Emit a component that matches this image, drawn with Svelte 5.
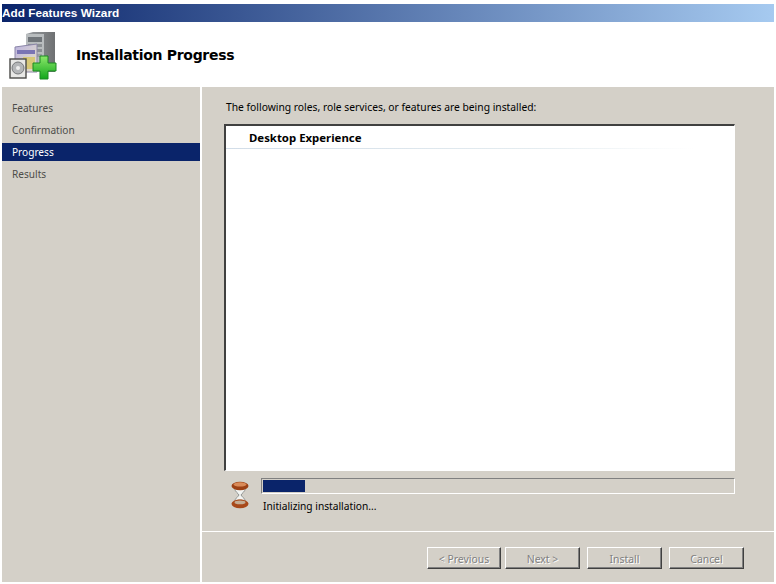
<script lang="ts">
	const STEPS = ['Features', 'Confirmation', 'Progress', 'Results'];
	const ACTIVE = 'Progress';
	const BUTTONS = [
		{ label: '< Previous', width: 74 },
		{ label: 'Next >', width: 75 },
		{ label: 'Install', width: 75 },
		{ label: 'Cancel', width: 75 }
	];
</script>

<div class="wizard">
	<div class="titlebar">Add Features Wizard</div>

	<header class="header">
		<svg class="logo" width="50" height="50" viewBox="0 0 50 50" aria-hidden="true">
			<defs>
				<linearGradient id="tower" x1="0" y1="0" x2="1" y2="0">
					<stop offset="0" stop-color="#9a9ea2" />
					<stop offset="1" stop-color="#6e7072" />
				</linearGradient>
				<linearGradient id="plus" x1="0" y1="0" x2="0" y2="1">
					<stop offset="0" stop-color="#8ce86a" />
					<stop offset="1" stop-color="#12a61c" />
				</linearGradient>
				<linearGradient id="card" x1="0" y1="0" x2="1" y2="1">
					<stop offset="0" stop-color="#bcb4e0" />
					<stop offset="1" stop-color="#e8e2c6" />
				</linearGradient>
			</defs>
			<path d="M17 4 L24 2 H46 V42 H17 Z" fill="url(#tower)" />
			<rect x="17" y="4" width="18" height="38" fill="#b8bcbe" />
			<rect x="19" y="7" width="14" height="5" fill="#70757a" />
			<rect x="19" y="14" width="14" height="3" fill="#8c9094" />
			<rect x="19" y="19" width="14" height="3" fill="#8c9094" />
			<rect x="19" y="24" width="14" height="3" fill="#9a9ea2" />
			<path d="M6 17 L28 14 V42 H6 Z" fill="url(#card)" stroke="#8b86a8" stroke-width="1" />
			<rect x="8" y="20" width="18" height="4" fill="#7a74b4" />
			<rect x="14" y="27" width="12" height="12" fill="#d8c878" />
			<rect x="1" y="29" width="16" height="19" fill="#e8e8e6" stroke="#4a4a48" stroke-width="1.4" />
			<circle cx="9" cy="38" r="6" fill="#b4b6b8" stroke="#77797b" />
			<circle cx="9" cy="38" r="2" fill="#eeeeee" />
			<path d="M31 26 H39 V33 H47 V41 H39 V49 H31 V41 H24 V33 H31 Z" fill="url(#plus)" stroke="#1b8a22" stroke-width="1" />
		</svg>
		<h1>Installation Progress</h1>
	</header>

	<div class="body">
		<nav class="steps">
			{#each STEPS as step}
				<div class="step" class:active={step === ACTIVE}>{step}</div>
			{/each}
		</nav>

		<main class="main">
			<div class="content">
				<p class="intro">The following roles, role services, or features are being installed:</p>

				<div class="list">
					<div class="list-row">Desktop Experience</div>
				</div>

				<div class="status">
					<svg class="hourglass" width="18" height="28" viewBox="0 0 18 28" aria-hidden="true">
						<path d="M3.5 7 C4 11 7.5 12.5 8 14 C7.5 15.5 4 17 3.5 21 H14.5 C14 17 10.5 15.5 10 14 C10.5 12.5 14 11 14.5 7 Z" fill="#f2f4f2" stroke="#7c8280" stroke-width="0.8" />
						<path d="M7 18.5 H11 L13 21 H5 Z" fill="#b89474" />
						<ellipse cx="9" cy="5" rx="8.5" ry="4.2" fill="#9c4014" />
						<ellipse cx="9" cy="3.4" rx="6.5" ry="2.1" fill="#d98a58" />
						<ellipse cx="9" cy="22.8" rx="8.5" ry="4.4" fill="#a8481a" />
						<ellipse cx="9" cy="21.4" rx="5.5" ry="1.8" fill="#c4ac94" />
					</svg>
					<div class="status-right">
						<div class="progress"><div class="bar" style="width: {42}px"></div></div>
						<div class="status-text">Initializing installation...</div>
					</div>
				</div>
			</div>

			<footer class="footer">
				{#each BUTTONS as btn}
					<button type="button" disabled style="width: {btn.width}px">{btn.label}</button>
				{/each}
			</footer>
		</main>
	</div>
</div>

<style>
	:global(body) {
		margin: 0;
		background: #fff;
	}

	.wizard {
		width: 776px;
		height: 584px;
		box-sizing: border-box;
		padding: 4px 2px 2px 2px;
		display: flex;
		flex-direction: column;
		font-family: "Noto Sans", "Liberation Sans", sans-serif;
		font-size: 10.3px;
		color: #000;
		overflow: hidden;
	}

	.titlebar {
		height: 18px;
		line-height: 18px;
		background: linear-gradient(to right, #0a246a, #a6caf0);
		color: #fff;
		font-family: "Liberation Sans", sans-serif;
		font-size: 11.8px;
		font-weight: 700;
	}

	.header {
		height: 65px;
		display: flex;
		align-items: center;
		background: #fff;
	}

	.logo {
		margin-left: 7px;
	}

	.header h1 {
		margin: 0 0 0 17px;
		font-family: "DejaVu Sans", sans-serif;
		font-size: 14px;
		font-weight: 700;
		letter-spacing: -0.3px;
	}

	.body {
		flex: 1;
		display: flex;
		min-height: 0;
	}

	.steps {
		width: 198px;
		background: #d4d0c8;
		padding-top: 12px;
		color: #4d4d4a;
		font-size: 10.1px;
	}

	.step {
		height: 18px;
		line-height: 18px;
		padding-left: 10px;
		margin-bottom: 4px;
	}

	.step.active {
		background: #0a246a;
		color: #fff;
	}

	.main {
		margin-left: 2px;
		flex: 1;
		background: #d4d0c8;
		display: flex;
		flex-direction: column;
	}

	.content {
		flex: 1;
		padding: 0 39px 0 22px;
		display: flex;
		flex-direction: column;
	}

	.intro {
		margin: 13px 0 9px 2px;
		height: 15px;
		line-height: 15px;
	}

	.list {
		height: 347px;
		box-sizing: border-box;
		background: #fff;
		border-top: 2px solid #404040;
		border-left: 2px solid #404040;
		border-right: 1px solid #fff;
		border-bottom: 1px solid #fff;
	}

	.list-row {
		height: 23px;
		line-height: 23px;
		padding-left: 23px;
		font-weight: 700;
		font-size: 11.4px;
		background: linear-gradient(to right, #d2dde8, #e4ecf0 60%, #ffffff 92%) left bottom / 100% 1px no-repeat;
	}

	.status {
		margin-top: 7px;
		display: flex;
		height: 40px;
	}

	.hourglass {
		margin: 3px 0 0 7px;
	}

	.status-right {
		margin-left: 12px;
		flex: 1;
	}

	.progress {
		height: 16px;
		box-sizing: border-box;
		border-top: 1px solid #808080;
		border-left: 1px solid #808080;
		border-right: 1px solid #fff;
		border-bottom: 1px solid #fff;
		padding: 1px;
	}

	.bar {
		height: 12px;
		background: #0a246a;
	}

	.status-text {
		margin: 5px 0 0 2px;
		line-height: 15px;
		font-size: 10.2px;
	}

	.footer {
		height: 51px;
		flex: none;
		border-top: 1px solid #fff;
		box-sizing: border-box;
		margin-right: -2px;
		display: flex;
		align-items: flex-start;
		padding: 15px 0 0 225px;
		gap: 4px;
	}

	.footer button {
		height: 22px;
		box-sizing: border-box;
		background: #d4d0c8;
		border: 1px solid;
		border-color: #fff #404040 #404040 #fff;
		box-shadow: inset -1px -1px 0 #808080;
		padding: 1px 0 0;
		font-family: inherit;
		font-size: 10.4px;
		color: #808080;
		text-shadow: 1px 1px 0 #fff;
	}

	.footer button:nth-child(3),
	.footer button:nth-child(4) {
		margin-left: 3px;
	}
</style>
